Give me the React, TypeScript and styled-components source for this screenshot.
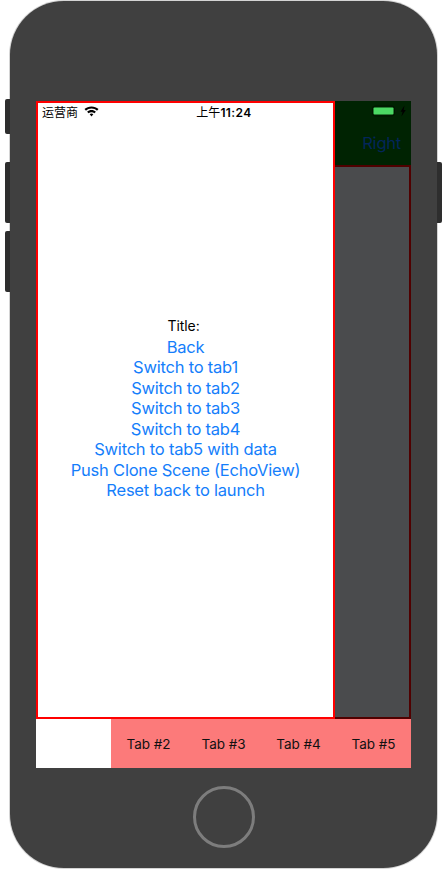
import React from "react";
import styled, { createGlobalStyle } from "styled-components";

const Global = createGlobalStyle`
  html, body { margin: 0; padding: 0; background: #fff; }
  body { font-family: Inter, "Noto Sans CJK SC", sans-serif; }
`;

const Stage = styled.div`
  width: 447px;
  height: 869px;
  padding: 1px 0 0 10px;
  box-sizing: border-box;
  overflow: hidden;
`;

const Phone = styled.div`
  position: relative;
  width: 427px;
  height: 867px;
  box-sizing: border-box;
  padding: 100px 26px 0;
  background: #404040;
  border-radius: 54px;
  box-shadow: 0 0 0 1px #d4d4d4;
`;

const SideButton = styled.div<{ $side: "left" | "right"; $top: number; $height: number }>`
  position: absolute;
  top: ${(p) => p.$top}px;
  height: ${(p) => p.$height}px;
  width: 5px;
  background: #2e2e2e;
  ${(p) => (p.$side === "left" ? "left: -5px; border-radius: 2px 0 0 2px;" : "right: -5px; border-radius: 0 2px 2px 0;")}
`;

const Screen = styled.div`
  position: relative;
  width: 375px;
  height: 667px;
  display: flex;
  flex-direction: column;
  overflow: hidden;
`;

const Main = styled.div`
  display: flex;
  height: 618px;
`;

const Frame = styled.div`
  width: 299px;
  box-sizing: border-box;
  border: 2px solid #ff0000;
  background: #fff;
  display: flex;
  flex-direction: column;
  align-items: center;
  justify-content: center;
  padding-bottom: 3px;
`;

const Title = styled.div`
  font-size: 14px;
  line-height: 20.5px;
  color: #000;
  white-space: pre;
  letter-spacing: -0.1px;
`;

const LinkText = styled.div`
  font-size: 16.5px;
  line-height: 20.5px;
  letter-spacing: -0.22px;
  color: #147efb;
  white-space: nowrap;
`;

const Side = styled.div`
  width: 76px;
  display: flex;
  flex-direction: column;
`;

const Header = styled.div`
  height: 64px;
  box-sizing: border-box;
  background: #002302;
  padding: 20px 10px 0 0;
  display: flex;
  align-items: center;
  justify-content: flex-end;
`;

const RightLabel = styled.span`
  font-size: 16.5px;
  letter-spacing: -0.22px;
  color: #03265a;
`;

const Panel = styled.div`
  flex: 1;
  box-sizing: border-box;
  background: #4a4b4d;
  border: 2px solid #500000;
  border-left: 0;
`;

const Tabs = styled.div`
  display: flex;
  height: 49px;
  background: #fc7a7a;
`;

const Tab = styled.div<{ $blank?: boolean }>`
  flex: 1;
  display: flex;
  align-items: center;
  justify-content: center;
  font-size: 13.5px;
  letter-spacing: -0.05px;
  color: #111;
  background: ${(p) => (p.$blank ? "#fff" : "transparent")};
`;

const StatusBar = styled.div`
  position: absolute;
  top: 0;
  left: 0;
  right: 0;
  height: 20px;
  display: grid;
  grid-template-columns: 1fr auto 1fr;
  align-items: center;
  padding: 0 5px 0 6px;
  box-sizing: border-box;
  font-size: 12px;
  color: #000;
`;

const Carrier = styled.div`
  display: flex;
  align-items: center;
  gap: 6px;
`;

const Time = styled.div`
  font-size: 12px;
`;

const Digits = styled.span`
  font-weight: 600;
  letter-spacing: 0.4px;
`;

const Power = styled.div`
  display: flex;
  align-items: center;
  justify-content: flex-end;
`;

const Home = styled.div`
  width: 62px;
  height: 62px;
  box-sizing: border-box;
  margin: 18px auto 0;
  border: 3px solid #7d7d7d;
  border-radius: 50%;
`;

const links = [
  "Back",
  "Switch to tab1",
  "Switch to tab2",
  "Switch to tab3",
  "Switch to tab4",
  "Switch to tab5 with data",
  "Push Clone Scene (EchoView)",
  "Reset back to launch",
];

const Wifi = () => (
  <svg width="15" height="11" viewBox="0 0 15 11">
    <path d="M7.5 0.4C4.8 0.4 2.4 1.4 0.5 3.1L2 4.7C3.5 3.3 5.4 2.6 7.5 2.6S11.5 3.3 13 4.7L14.5 3.1C12.6 1.4 10.2 0.4 7.5 0.4Z" fill="#000" />
    <path d="M7.5 4C5.8 4 4.3 4.6 3.1 5.7L4.6 7.3C5.4 6.6 6.4 6.2 7.5 6.2S9.6 6.6 10.4 7.3L11.9 5.7C10.7 4.6 9.2 4 7.5 4Z" fill="#000" />
    <path d="M7.5 7.5C6.8 7.5 6.2 7.8 5.7 8.2L7.5 10.4L9.3 8.2C8.8 7.8 8.2 7.5 7.5 7.5Z" fill="#000" />
  </svg>
);

const Battery = () => (
  <svg width="34" height="12" viewBox="0 0 34 12">
    <rect x="0.5" y="1" width="22" height="10" rx="2.5" fill="none" stroke="#001500" />
    <rect x="1.5" y="2.5" width="20" height="7" rx="1" fill="#4cd964" />
    <path d="M23.5 4.5L25 6L23.5 7.5Z" fill="#0b1f0b" />
    <path d="M32.5 0.5L28.5 6.8H30.6L29.4 11.5L33.8 5H31.6Z" fill="#000" />
  </svg>
);

export default function App() {
  return (
    <Stage>
      <Global />
      <Phone>
        <SideButton $side="left" $top={98} $height={35} />
        <SideButton $side="left" $top={161} $height={61} />
        <SideButton $side="left" $top={230} $height={61} />
        <SideButton $side="right" $top={161} $height={61} />
        <Screen>
          <Main>
            <Frame>
              <Title>{"Title: "}</Title>
              {links.map((l) => (
                <LinkText key={l}>{l}</LinkText>
              ))}
            </Frame>
            <Side>
              <Header>
                <RightLabel>Right</RightLabel>
              </Header>
              <Panel />
            </Side>
          </Main>
          <Tabs>
            <Tab $blank />
            <Tab>Tab #2</Tab>
            <Tab>Tab #3</Tab>
            <Tab>Tab #4</Tab>
            <Tab>Tab #5</Tab>
          </Tabs>
          <StatusBar>
            <Carrier>
              运营商
              <Wifi />
            </Carrier>
            <Time>
              上午<Digits>11:24</Digits>
            </Time>
            <Power>
              <Battery />
            </Power>
          </StatusBar>
        </Screen>
        <Home />
      </Phone>
    </Stage>
  );
}
